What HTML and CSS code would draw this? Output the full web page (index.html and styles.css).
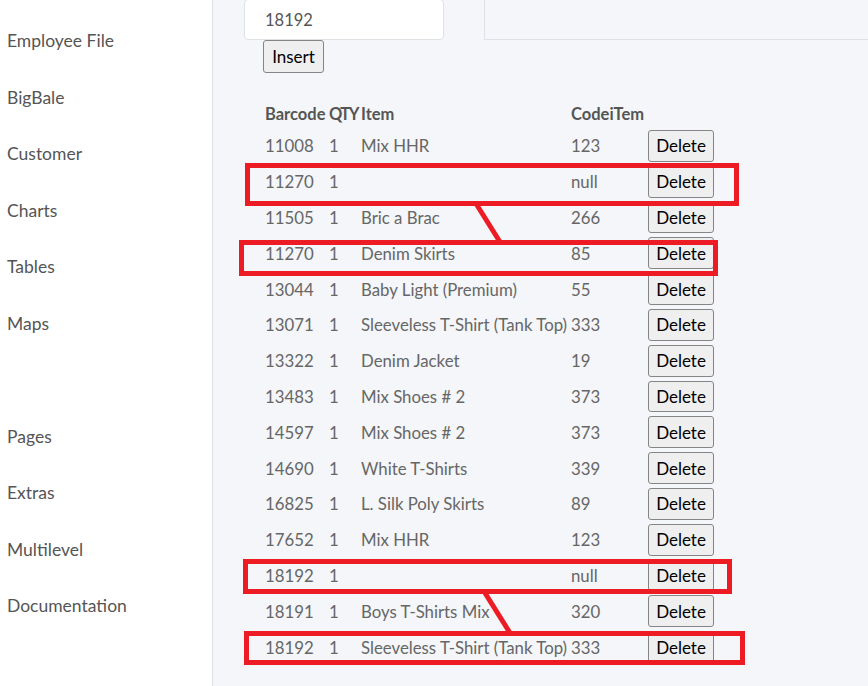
FILE: index.html
```html
<!DOCTYPE html>
<html lang="en">
<head>
  <meta charset="UTF-8">
  <meta name="viewport" content="width=device-width, initial-scale=1.0">
  <title>BigBale - Items</title>
  <link rel="stylesheet" href="styles.css">
</head>
<body>
  <aside class="sidebar">
    <nav class="nav">
      <a class="nav-link" href="#">Employee File</a>
      <a class="nav-link" href="#">BigBale</a>
      <a class="nav-link" href="#">Customer</a>
      <a class="nav-link" href="#">Charts</a>
      <a class="nav-link" href="#">Tables</a>
      <a class="nav-link" href="#">Maps</a>
      <span class="nav-spacer"></span>
      <a class="nav-link" href="#">Pages</a>
      <a class="nav-link" href="#">Extras</a>
      <a class="nav-link" href="#">Multilevel</a>
      <a class="nav-link" href="#">Documentation</a>
    </nav>
  </aside>

  <main class="content">
    <div class="top-row">
      <input class="barcode-input" type="text" value="18192">
      <div class="blank-card"></div>
    </div>
    <button class="btn btn-insert">Insert</button>

    <!-- Scanned items -->
    <table class="items">
      <thead>
        <tr>
          <th class="col-barcode">Barcode</th>
          <th class="col-qty">QTY</th>
          <th class="col-item">Item</th>
          <th class="col-code">CodeiTem</th>
          <th class="col-action"></th>
        </tr>
      </thead>
      <tbody>
        <tr><td>11008</td><td>1</td><td>Mix HHR</td><td>123</td><td><button class="btn btn-delete">Delete</button></td></tr>
        <tr><td>11270</td><td>1</td><td></td><td>null</td><td><button class="btn btn-delete">Delete</button></td></tr>
        <tr><td>11505</td><td>1</td><td>Bric a Brac</td><td>266</td><td><button class="btn btn-delete">Delete</button></td></tr>
        <tr><td>11270</td><td>1</td><td>Denim Skirts</td><td>85</td><td><button class="btn btn-delete">Delete</button></td></tr>
        <tr><td>13044</td><td>1</td><td>Baby Light (Premium)</td><td>55</td><td><button class="btn btn-delete">Delete</button></td></tr>
        <tr><td>13071</td><td>1</td><td>Sleeveless T-Shirt (Tank Top)</td><td>333</td><td><button class="btn btn-delete">Delete</button></td></tr>
        <tr><td>13322</td><td>1</td><td>Denim Jacket</td><td>19</td><td><button class="btn btn-delete">Delete</button></td></tr>
        <tr><td>13483</td><td>1</td><td>Mix Shoes # 2</td><td>373</td><td><button class="btn btn-delete">Delete</button></td></tr>
        <tr><td>14597</td><td>1</td><td>Mix Shoes # 2</td><td>373</td><td><button class="btn btn-delete">Delete</button></td></tr>
        <tr><td>14690</td><td>1</td><td>White T-Shirts</td><td>339</td><td><button class="btn btn-delete">Delete</button></td></tr>
        <tr><td>16825</td><td>1</td><td>L. Silk Poly Skirts</td><td>89</td><td><button class="btn btn-delete">Delete</button></td></tr>
        <tr><td>17652</td><td>1</td><td>Mix HHR</td><td>123</td><td><button class="btn btn-delete">Delete</button></td></tr>
        <tr><td>18192</td><td>1</td><td></td><td>null</td><td><button class="btn btn-delete">Delete</button></td></tr>
        <tr><td>18191</td><td>1</td><td>Boys T-Shirts Mix</td><td>320</td><td><button class="btn btn-delete">Delete</button></td></tr>
        <tr><td>18192</td><td>1</td><td>Sleeveless T-Shirt (Tank Top)</td><td>333</td><td><button class="btn btn-delete">Delete</button></td></tr>
      </tbody>
    </table>
  </main>

  <!-- Red markup drawn over the screenshot -->
  <svg class="annotations" width="868" height="686" viewBox="0 0 868 686">
    <g fill="none" stroke="#ed1c24" stroke-width="5">
      <rect x="247.5" y="165.5" width="489" height="38"/>
      <rect x="241.5" y="242.5" width="474" height="31"/>
      <rect x="245.5" y="561.5" width="484" height="30"/>
      <rect x="246.5" y="633.5" width="496" height="29"/>
      <line x1="475" y1="202" x2="500" y2="242"/>
      <line x1="485" y1="593" x2="510" y2="633"/>
    </g>
  </svg>
</body>
</html>
```

FILE: styles.css
```css
/* General styles */
body {
  margin: 0;
  padding: 0;
  display: flex;
  min-height: 100vh;
  font-family: 'Lato', 'Noto Sans', sans-serif;
  font-size: 16.8px;
  background-color: #f4f6f9;
  color: #666;
  overflow: hidden;
}

/* Sidebar */
.sidebar {
  width: 212px;
  flex-shrink: 0;
  background-color: #fff;
  border-right: 1px solid #dee2e6;
}

.nav {
  display: flex;
  flex-direction: column;
  padding-top: 13px;
}

.nav-link,
.nav-spacer {
  display: block;
  height: 56.5px;
  line-height: 56.5px;
  padding-left: 7px;
  color: #555;
  text-decoration: none;
  font-size: 17.5px;
}

/* Main area */
.content {
  flex: 1;
  padding-left: 31px;
}

.top-row {
  display: flex;
  gap: 40px;
  margin-top: -1px;
  height: 41px;
}

.barcode-input {
  box-sizing: border-box;
  width: 200px;
  height: 41px;
  padding: 0 20px;
  border: 1px solid #dee2e6;
  border-radius: 4px;
  background-color: #fff;
  font-family: inherit;
  font-size: 16.5px;
  color: #555;
  outline: none;
}

.blank-card {
  flex: 1;
  border-left: 1px solid #dee2e6;
  border-bottom: 1px solid #dee2e6;
}

/* Buttons */
.btn {
  box-sizing: border-box;
  font-family: inherit;
  font-size: 17px;
  color: #000;
  background-color: #efefef;
  border: 1px solid #858585;
  border-radius: 3px;
  padding: 0;
}

.btn-insert {
  display: block;
  margin-left: 19px;
  width: 61px;
  height: 33px;
}

.btn-delete {
  display: block;
  width: 66px;
  height: 31.8px;
}

/* Items table */
.items {
  margin-top: 26px;
  margin-left: 18px;
  width: 455px;
  table-layout: fixed;
  border-spacing: 2px;
}

.items th,
.items td {
  box-sizing: border-box;
  padding: 1px;
  text-align: left;
  white-space: nowrap;
}

.items th {
  height: 26px;
  font-size: 16.5px;
  font-weight: bold;
  color: #555;
}

.items th.col-qty {
  letter-spacing: -1.6px;
}

.items td {
  height: 33.8px;
}

.col-barcode { width: 62px; }
.col-qty { width: 30px; }
.col-item { width: 208px; }
.col-code { width: 75px; }
.col-action { width: 68px; }

/* Annotation overlay */
.annotations {
  position: absolute;
  top: 0;
  left: 0;
  pointer-events: none;
}
```
